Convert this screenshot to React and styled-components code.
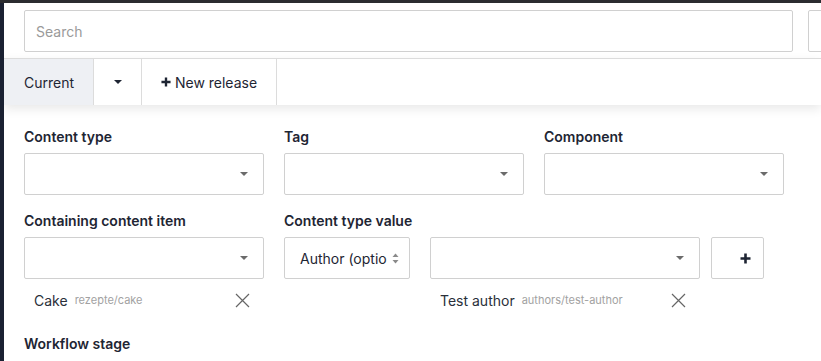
import React from 'react';
import styled, { createGlobalStyle } from 'styled-components';

const GlobalStyle = createGlobalStyle`
  html, body {
    margin: 0;
    padding: 0;
    background: #ffffff;
    font-family: Inter, "Noto Sans", sans-serif;
    color: #1e2533;
  }
  * { box-sizing: border-box; }
`;

const Window = styled.div`
  width: 821px;
  height: 361px;
  overflow: hidden;
  display: flex;
  flex-direction: column;
  border-top: 3px solid #2b2c30;
`;

const Frame = styled.div`
  flex: 1;
  display: flex;
  min-height: 0;
`;

const SideStrip = styled.div`
  width: 4px;
  flex: none;
  background: #1a2132;
`;

const Main = styled.div`
  flex: 1;
  min-width: 0;
  display: flex;
  flex-direction: column;
  overflow: hidden;
`;

const SearchRow = styled.div`
  display: flex;
  gap: 15px;
  padding: 7px 0 6px 20px;
`;

const SearchInput = styled.div`
  flex: none;
  width: ${p => p.width}px;
  height: 42px;
  border: 1px solid #d0d0d0;
  border-radius: 2px;
  display: flex;
  align-items: center;
  padding-left: 11px;
  font-size: 14px;
  color: #9a9a9a;
`;

const Toolbar = styled.div`
  display: flex;
  height: 47px;
  border-top: 1px solid #dcdcdc;
  box-shadow: 0 4px 10px rgba(0, 0, 0, 0.09);
  position: relative;
  z-index: 1;
`;

const ToolButton = styled.div`
  width: ${p => p.width}px;
  display: flex;
  align-items: center;
  justify-content: ${p => (p.center ? 'center' : 'flex-start')};
  gap: 4px;
  padding-left: ${p => (p.center ? 0 : 20)}px;
  background: ${p => (p.active ? '#eef0f4' : '#ffffff')};
  border-right: 1px solid #dcdcdc;
  font-size: 14px;
  color: #1e2533;
`;

const Form = styled.div`
  padding: 23px 0 0 20px;
  display: flex;
  flex-direction: column;
`;

const FieldRow = styled.div`
  display: flex;
  gap: 20px;
  margin-bottom: ${p => p.mb || 0}px;
`;

const Field = styled.div`
  width: ${p => p.width || 240}px;
  display: flex;
  flex-direction: column;
`;

const Label = styled.div`
  font-size: 14px;
  font-weight: 600;
  line-height: 17px;
  margin-bottom: 8px;
  color: #1e2533;
`;

const SelectBox = styled.div`
  width: ${p => (p.width ? `${p.width}px` : '100%')};
  flex: none;
  height: 42px;
  border: 1px solid #d0d0d0;
  border-radius: 2px;
  display: flex;
  align-items: center;
  justify-content: ${p => (p.center ? 'center' : 'space-between')};
  padding: 0 ${p => (p.center ? 0 : p.pr || 14)}px 0 15px;
  font-size: 14px;
  color: #1e2533;
  background: #fff;
`;

const Caret = styled.span`
  width: 0;
  height: 0;
  border-left: 4.5px solid transparent;
  border-right: 4.5px solid transparent;
  border-top: 4.5px solid ${p => p.color || '#6b6b6b'};
  margin-right: ${p => p.mr || 0}px;
`;

const Inline = styled.div`
  display: flex;
  gap: ${p => p.gap || 0}px;
  align-items: flex-start;
`;

const Stack = styled.div`
  display: flex;
  flex-direction: column;
`;

const Item = styled.div`
  width: ${p => p.width}px;
  height: 42px;
  display: flex;
  align-items: center;
  padding: 0 14px 0 10px;
`;

const ItemName = styled.span`
  font-size: 14px;
  color: #2a2f3a;
  margin-right: 7px;
`;

const ItemPath = styled.span`
  font-size: 11px;
  color: #a2a2a2;
  flex: 1;
`;

const Updown = () => (
  <svg width="7" height="11" viewBox="0 0 7 11">
    <path d="M3.5 0.5 L6.5 4 H0.5 Z" fill="#8a8a8a" />
    <path d="M3.5 10.5 L6.5 7 H0.5 Z" fill="#8a8a8a" />
  </svg>
);

const Close = () => (
  <svg width="15" height="15" viewBox="0 0 15 15">
    <path d="M1 1 L14 14 M14 1 L1 14" stroke="#666" strokeWidth="1.2" />
  </svg>
);

const Plus = ({ size = 11 }) => (
  <svg width={size} height={size} viewBox="0 0 11 11">
    <path d="M5.5 0.5 V10.5 M0.5 5.5 H10.5" stroke="#1e2533" strokeWidth="2.6" />
  </svg>
);

const App = () => (
  <Window>
    <GlobalStyle />
    <Frame>
      <SideStrip />
      <Main>
        <SearchRow>
          <SearchInput width={769}>Search</SearchInput>
          <SearchInput width={200} />
        </SearchRow>
        <Toolbar>
          <ToolButton width={90} active>Current</ToolButton>
          <ToolButton width={48} center><Caret color="#1e2533" /></ToolButton>
          <ToolButton width={135} center><Plus size={10} />New release</ToolButton>
        </Toolbar>
        <Form>
          <FieldRow mb={17}>
            <Field>
              <Label>Content type</Label>
              <SelectBox><span /><Caret mr={1} /></SelectBox>
            </Field>
            <Field>
              <Label>Tag</Label>
              <SelectBox><span /><Caret mr={1} /></SelectBox>
            </Field>
            <Field>
              <Label>Component</Label>
              <SelectBox><span /><Caret mr={1} /></SelectBox>
            </Field>
          </FieldRow>
          <FieldRow mb={14}>
            <Field>
              <Label>Containing content item</Label>
              <SelectBox><span /><Caret mr={1} /></SelectBox>
              <Item width={240}>
                <ItemName>Cake</ItemName>
                <ItemPath>rezepte/cake</ItemPath>
                <Close />
              </Item>
            </Field>
            <Field width={480}>
              <Label>Content type value</Label>
              <Inline gap={20}>
                <SelectBox width={126} pr={10}>
                  Author (optio
                  <Updown />
                </SelectBox>
                <Stack>
                  <Inline gap={11}>
                    <SelectBox width={270}><span /><Caret mr={1} /></SelectBox>
                    <SelectBox width={53} center><Plus /></SelectBox>
                  </Inline>
                  <Item width={270}>
                    <ItemName>Test author</ItemName>
                    <ItemPath>authors/test-author</ItemPath>
                    <Close />
                  </Item>
                </Stack>
              </Inline>
            </Field>
          </FieldRow>
          <Label>Workflow stage</Label>
        </Form>
      </Main>
    </Frame>
  </Window>
);

export default App;
